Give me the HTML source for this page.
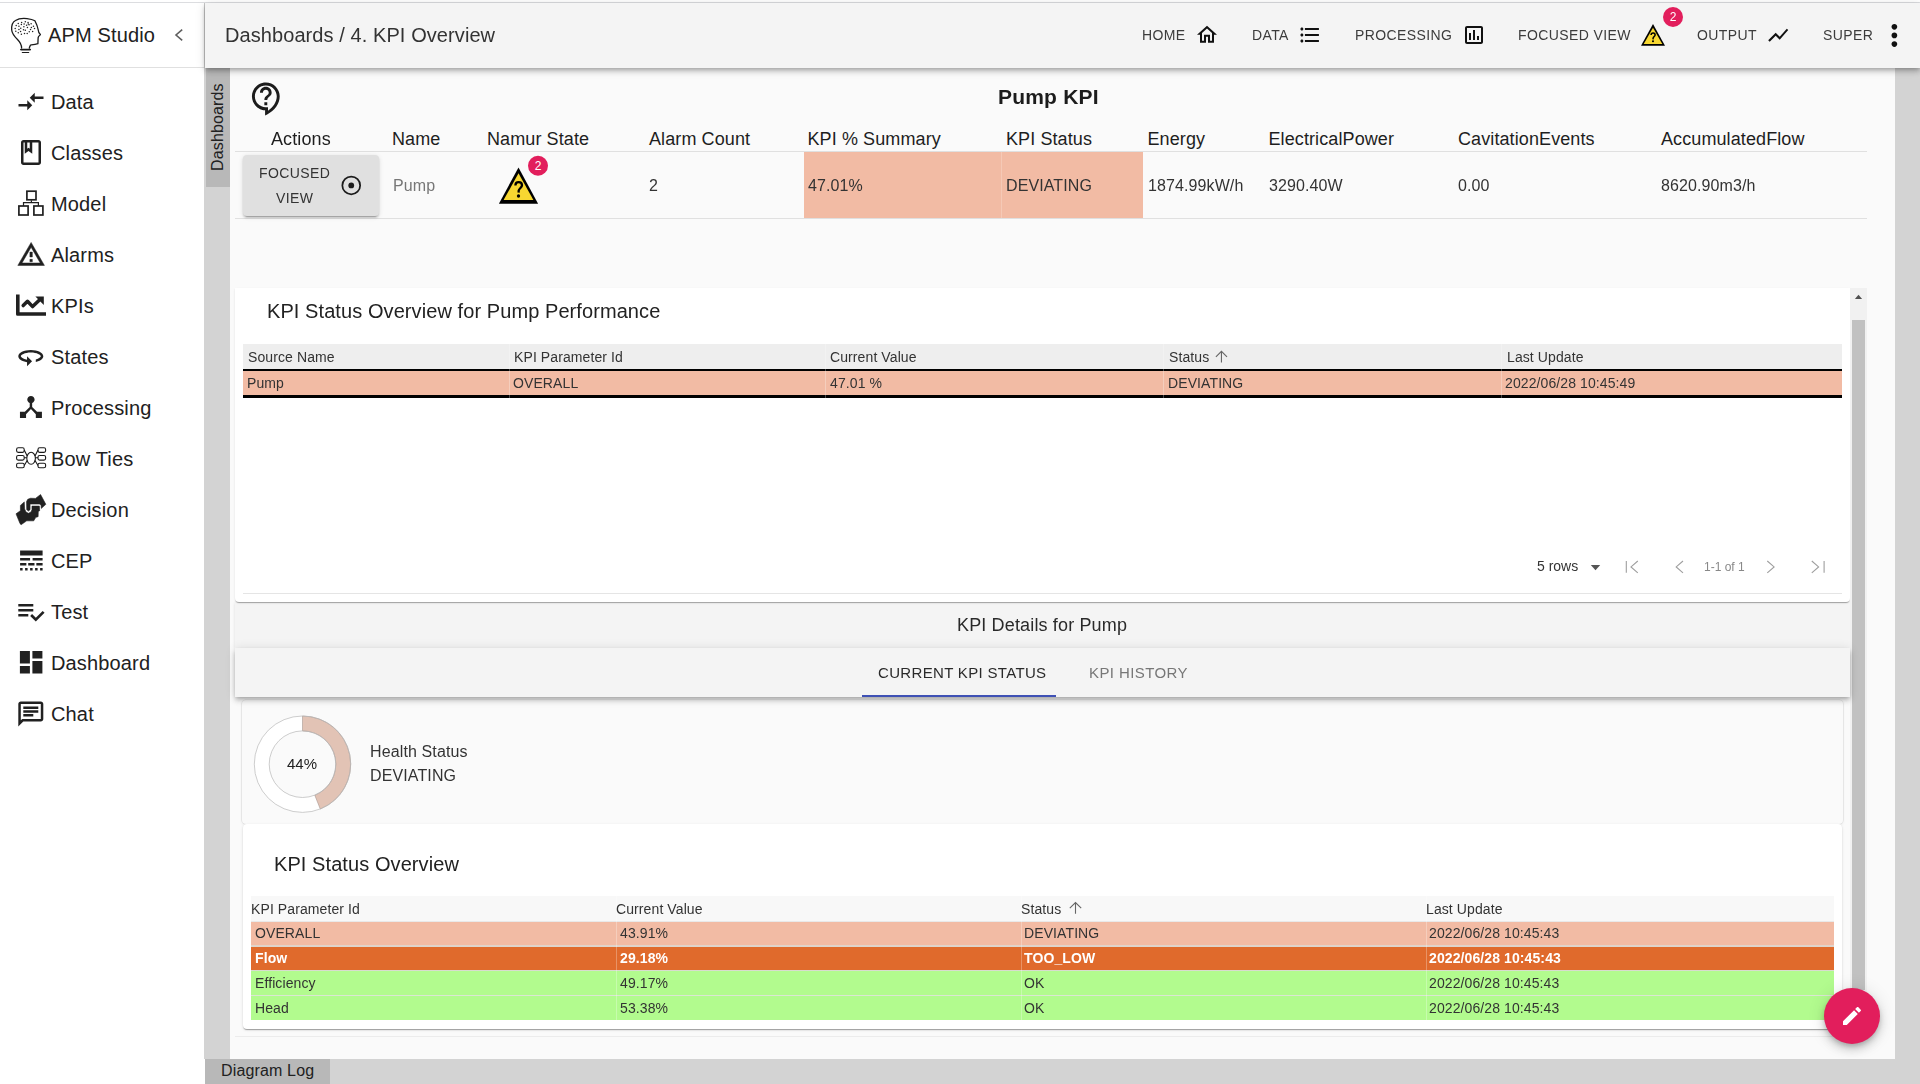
<!DOCTYPE html>
<html><head><meta charset="utf-8">
<style>
*{box-sizing:border-box;margin:0;padding:0}
html,body{width:1920px;height:1084px;overflow:hidden;background:#fff;font-family:"Liberation Sans",sans-serif;color:#212121}
.a{position:absolute}
.t{position:absolute;white-space:nowrap;line-height:1;z-index:6}
.th1{top:129.8px;font-size:18px;letter-spacing:0.1px;color:#1e1e1e}
.td1{top:177.5px;font-size:16px;letter-spacing:0.1px;color:#333}
.th2{top:350.15px;font-size:14px;letter-spacing:0.1px;color:#333}
.td2{top:375.95px;font-size:14px;letter-spacing:0.1px;color:#333}
.th3{top:902.15px;font-size:14px;letter-spacing:0.1px;color:#333}
.td3{font-size:14px;letter-spacing:0.1px;color:#333}
.g{will-change:transform}
.hb{top:28px;font-size:14px;letter-spacing:0.4px;color:#3c3c3c}
svg{position:absolute;display:block}
</style></head><body>
<!-- top line -->
<div class="a" style="left:0;top:2px;width:1920px;height:1px;background:#dcdde0"></div>

<!-- SIDEBAR -->
<div id="sidebar" class="a" style="left:0;top:3px;width:204px;height:1081px;background:#fff">
</div>
<svg class="a" style="left:0;top:0" width="204" height="1084" viewBox="0 0 204 1084" fill="#212121">
 <!-- logo -->
 <g fill="none" stroke="#1a1a1a" stroke-width="1.3" stroke-linecap="round" stroke-linejoin="round">
  <path d="M21.6,48.1 C21.6,45 21,43 17.5,39.5 C14,36 12,33.5 11.7,30 C11.4,25.5 12.5,22 15.5,20.5 C18.5,18.5 23,18.2 27,18.6 C30,19 33.5,20 34.9,20.8 C36,23 37.5,26 38,29 C38.3,32 39,33.5 40.4,34.6 C39.5,35.8 38.5,36 38.2,37.5 C38,39 38,41.5 37.9,43.7 C35,44.5 32.5,44.8 30.5,45.1 C30,46 29.5,47 29.3,48.1"/>
 </g>
 <g stroke="#1a1a1a" stroke-linecap="round"><line x1="20.8" y1="49.6" x2="30.3" y2="49.6" stroke-width="1.6"/><line x1="22.3" y1="52.5" x2="28.7" y2="52.5" stroke-width="1.1"/></g>
 <g fill="#222"><circle cx="25.34" cy="21.76" r="0.75"/><circle cx="28.04" cy="22.59" r="0.75"/><circle cx="31.15" cy="23.83" r="0.75"/><circle cx="21.60" cy="22.38" r="0.75"/><circle cx="18.28" cy="23.62" r="0.75"/><circle cx="21.40" cy="24.45" r="0.75"/><circle cx="24.10" cy="24.04" r="0.75"/><circle cx="26.59" cy="25.28" r="0.75"/><circle cx="29.08" cy="24.66" r="0.75"/><circle cx="33.44" cy="26.32" r="0.75"/><circle cx="16.21" cy="25.49" r="0.75"/><circle cx="18.91" cy="26.32" r="0.75"/><circle cx="23.89" cy="26.74" r="0.75"/><circle cx="27.42" cy="27.57" r="0.75"/><circle cx="31.36" cy="27.57" r="0.75"/><circle cx="34.47" cy="28.40" r="0.75"/><circle cx="15.17" cy="28.60" r="0.75"/><circle cx="18.91" cy="29.43" r="0.75"/><circle cx="20.77" cy="28.19" r="0.75"/><circle cx="23.47" cy="29.85" r="0.75"/><circle cx="25.34" cy="30.26" r="0.75"/><circle cx="30.53" cy="29.43" r="0.75"/><circle cx="15.79" cy="31.30" r="0.75"/><circle cx="20.57" cy="31.51" r="0.75"/><circle cx="24.51" cy="33.38" r="0.75"/><circle cx="27.21" cy="33.59" r="0.75"/><circle cx="29.28" cy="31.72" r="0.75"/><circle cx="32.60" cy="31.51" r="0.75"/><circle cx="18.28" cy="32.76" r="0.75"/><circle cx="21.40" cy="34.21" r="0.75"/><circle cx="28.25" cy="24.04" r="0.75"/></g>
 <!-- chevron -->
 <path d="M182.2,29.6 L176,35 L182.2,40.4" fill="none" stroke="#5f5f5f" stroke-width="1.6"/>
 <!-- icons -->
 <g transform="translate(16,86.5) scale(1.25)"><path d="M9.01 14H2v2h7.01v3L13 15l-3.99-4v3zm5.98-1v-3H22V8h-7.01V5L11 9l3.99 4z"/></g>
 <g transform="translate(16,137.5) scale(1.25)"><path d="M18 2H6c-1.1 0-2 .9-2 2v16c0 1.1.9 2 2 2h12c1.1 0 2-.9 2-2V4c0-1.1-.9-2-2-2zM9 4h2v5l-1-.75L9 9V4zm9 16H6V4h1v9l3-2.25L13 13V4h5v16z"/></g>
 <g fill="none" stroke="#212121" stroke-width="1.7">
  <rect x="26.9" y="191.2" width="9.1" height="8.6"/>
  <rect x="18.9" y="206" width="9.2" height="9"/>
  <rect x="33.9" y="206" width="9" height="9"/>
  <path d="M31.4,200.2 V203 M23.5,206 V202.6 H38.4 V206" stroke-width="1.2"/>
 </g>
 <g transform="translate(16.6,240) scale(1.21)" stroke="#212121" stroke-width="0.4"><path d="M12 5.99L19.53 19H4.47L12 5.99M12 2L1 21h22L12 2zm1 14h-2v2h2v-2zm0-6h-2v4h2v-4z"/></g>
 <!-- KPIs -->
 <g>
  <path d="M16,294.4 h3.6 v17.8 h26.4 v3.6 H17.5 a1.5,1.5 0 0 1 -1.5,-1.5z"/>
  <path d="M23.2,305.6 L27.5,301.3 L32.6,306.6 L39.2,300.2" fill="none" stroke="#212121" stroke-width="3.5" stroke-linecap="round" stroke-linejoin="round"/>
  <path d="M35.4,296.6 H43.8 V305z"/>
 </g>
 <g transform="translate(15.8,341.25) scale(1.25)"><path d="M12 7C6.48 7 2 9.24 2 12c0 2.24 2.94 4.13 7 4.77V20l4-4-4-4v2.73c-3.15-.56-5-1.9-5-2.73 0-1.06 3.04-3 8-3s8 1.94 8 3c0 .73-1.46 1.89-4 2.53v2.05c3.53-.77 6-2.53 6-4.58 0-2.76-4.48-5-10-5z"/></g>
 <g transform="translate(16.3,392.3) scale(1.22)"><path d="M17 16l-4-4V8.82C14.16 8.4 15 7.3 15 6c0-1.66-1.34-3-3-3S9 4.34 9 6c0 1.3.84 2.4 2 2.82V12l-4 4H3v5h5v-3.05l4-4.2 4 4.2V21h5v-5h-4z"/></g>
 <!-- bow ties -->
 <g fill="none" stroke="#1a1a1a" stroke-width="1.1">
  <rect x="16.6" y="447.8" width="7.6" height="4.6" rx="1.6"/>
  <rect x="16.6" y="455.5" width="7.6" height="4.6" rx="1.6"/>
  <rect x="16.6" y="463.2" width="7.6" height="4.6" rx="1.6"/>
  <rect x="38" y="447.8" width="7.6" height="4.6" rx="1.6"/>
  <rect x="38" y="455.5" width="7.6" height="4.6" rx="1.6"/>
  <rect x="38" y="463.2" width="7.6" height="4.6" rx="1.6"/>
  <ellipse cx="31.1" cy="458.3" rx="4.3" ry="6"/>
  <path d="M24.2,450 L27.2,456 M24.2,457.8 H26.8 M24.2,465.5 L27.2,460.5 M38,450 L35,456 M38,457.8 H35.4 M38,465.5 L35,460.5"/>
 </g>
 <!-- decision -->
 <polygon points="26.55,501.57 27.77,499.29 30.58,498.24 35.48,498.41 40.57,494.56 45.82,504.37 41.27,508.40 41.09,505.42 39.69,504.02 30.05,504.02 30.05,509.63 28.47,511.03 26.72,509.63" stroke="#212121" stroke-width="0.6" stroke-linejoin="round"/>
 <polygon points="16.03,513.83 20.41,510.68 20.41,505.42 24.27,501.92 24.62,508.93 26.02,512.08 28.47,513.31 30.93,512.08 31.98,509.63 31.98,506.12 39.34,506.12 39.69,510.68 38.29,511.38 38.11,516.64 35.83,517.34 33.73,520.84 26.72,520.84 21.11,524.70 20.06,523.65" stroke="#212121" stroke-width="0.6" stroke-linejoin="round"/>
 <g transform="translate(16.35,545.5) scale(1.25)"><path d="M3 16h5v-2H3v2zm6.5 0h5v-2h-5v2zm6.5 0h5v-2h-5v2zM3 20h2v-2H3v2zm4 0h2v-2H7v2zm4 0h2v-2h-2v2zm4 0h2v-2h-2v2zm4 0h2v-2h-2v2zM3 12h8v-2H3v2zm10 0h8v-2h-8v2zM3 4v4h18V4H3z"/></g>
 <g transform="translate(15.8,596.5) scale(1.25)"><path d="M14 10H2v2h12v-2zm0-4H2v2h12V6zM2 16h8v-2H2v2zm19.5-4.5L23 13l-6.99 7-4.51-4.5L13 14l3.01 3 5.49-5.5z"/></g>
 <g transform="translate(16.15,647.25) scale(1.25)"><path d="M3 13h8V3H3v10zm0 8h8v-6H3v6zm10 0h8V11h-8v10zm0-18v6h8V3h-8z"/></g>
 <g transform="translate(15.8,698.9) scale(1.25)"><path d="M4 4h16v12H5.17L4 17.17V4m0-2c-1.1 0-1.99.9-1.99 2L2 22l4-4h14c1.1 0 2-.9 2-2V4c0-1.1-.9-2-2-2H4zm2 10h8v2H6v-2zm0-3h12v2H6V9zm0-3h12v2H6V6z"/></g>
</svg>
<div class="t" style="left:48px;top:25px;font-size:20px;letter-spacing:0.15px;color:#212121">APM Studio</div>
<div class="t" style="left:51px;top:92px;font-size:20px;letter-spacing:0.15px;color:#212121">Data</div>
<div class="t" style="left:51px;top:143px;font-size:20px;letter-spacing:0.15px;color:#212121">Classes</div>
<div class="t" style="left:51px;top:194px;font-size:20px;letter-spacing:0.15px;color:#212121">Model</div>
<div class="t" style="left:51px;top:245px;font-size:20px;letter-spacing:0.15px;color:#212121">Alarms</div>
<div class="t" style="left:51px;top:296px;font-size:20px;letter-spacing:0.15px;color:#212121">KPIs</div>
<div class="t" style="left:51px;top:347px;font-size:20px;letter-spacing:0.15px;color:#212121">States</div>
<div class="t" style="left:51px;top:398px;font-size:20px;letter-spacing:0.15px;color:#212121">Processing</div>
<div class="t" style="left:51px;top:449px;font-size:20px;letter-spacing:0.15px;color:#212121">Bow Ties</div>
<div class="t" style="left:51px;top:500px;font-size:20px;letter-spacing:0.15px;color:#212121">Decision</div>
<div class="t" style="left:51px;top:551px;font-size:20px;letter-spacing:0.15px;color:#212121">CEP</div>
<div class="t" style="left:51px;top:602px;font-size:20px;letter-spacing:0.15px;color:#212121">Test</div>
<div class="t" style="left:51px;top:653px;font-size:20px;letter-spacing:0.15px;color:#212121">Dashboard</div>
<div class="t" style="left:51px;top:704px;font-size:20px;letter-spacing:0.15px;color:#212121">Chat</div>
<div class="a" style="left:0;top:67px;width:204px;height:1px;background:#e0e0e0"></div>
<div class="a" style="left:204px;top:3px;width:1px;height:65px;background:#c8c8c8"></div>

<!-- HEADER -->
<div class="a" style="left:205px;top:3px;width:1715px;height:65px;background:#f4f4f4;box-shadow:0 2px 4px -1px rgba(0,0,0,.2),0 4px 5px 0 rgba(0,0,0,.14),0 1px 10px 0 rgba(0,0,0,.12);z-index:5"></div>

<div class="t g" style="left:224.6px;top:25px;font-size:20px;letter-spacing:0.08px;color:#333">Dashboards / 4. KPI Overview</div>
<div class="t g hb" style="left:1142px">HOME</div>
<div class="t g hb" style="left:1252px">DATA</div>
<div class="t g hb" style="left:1355px">PROCESSING</div>
<div class="t g hb" style="left:1518px">FOCUSED VIEW</div>
<div class="t g hb" style="left:1697px">OUTPUT</div>
<div class="t g hb" style="left:1823px">SUPER</div>
<svg class="a" style="left:1100px;top:0;z-index:6" width="820" height="68" viewBox="1100 0 820 68" fill="#111">
 <g transform="translate(1195,22.8)"><path d="M12 5.69l5 4.5V18h-2v-6H9v6H7v-7.81l5-4.5M12 3L2 12h3v8h6v-6h2v6h6v-8h3L12 3z"/></g>
 <g transform="translate(1297.9,23.1)"><path d="M4 10.5c-.83 0-1.5.67-1.5 1.5s.67 1.5 1.5 1.5 1.5-.67 1.5-1.5-.67-1.5-1.5-1.5zm0-6c-.83 0-1.5.67-1.5 1.5S3.170 7.5 4 7.5 5.5 6.83 5.5 6 4.83 4.5 4 4.5zm0 12c-.83 0-1.5.68-1.5 1.5s.68 1.5 1.5 1.5 1.5-.68 1.5-1.5-.67-1.5-1.5-1.5zM7 19h14v-2H7v2zm0-6h14v-2H7v2zm0-8v2h14V5H7z"/></g>
 <g transform="translate(1462,22.9)"><path d="M19 3H5c-1.1 0-2 .9-2 2v14c0 1.1.9 2 2 2h14c1.1 0 2-.9 2-2V5c0-1.1-.9-2-2-2zm0 16H5V5h14v14zM7 10h2v7H7zm4-3h2v10h-2zm4 6h2v4h-2z"/></g>
 <path d="M1653,23.9 L1665,45.7 H1641z" fill="#000"/>
 <path d="M1653,27.8 L1662.3,44 H1643.7z" fill="#f7d731"/>
 <path d="M1651.1,35.1 C1651.1,33.7 1652,33 1653.1,33 C1654.3,33 1655.1,33.8 1655.1,34.9 C1655.1,36.3 1653.4,36.7 1653.1,38.2 L1653,39.4" fill="none" stroke="#000" stroke-width="1.5"/><circle cx="1653" cy="41.3" r="1.05" fill="#000"/>
 <circle cx="1673" cy="17" r="10" fill="#e21e5c"/>
 <text x="1673" y="21.3" font-family="Liberation Sans" font-size="12" text-anchor="middle" fill="#fff">2</text>
 <g transform="translate(1766.2,23.2)"><path d="M3.5 18.49l6-6.01 4 4L22 6.92l-1.41-1.41-7.09 7.97-4-4L2 16.99z"/></g>
 <g transform="translate(1877.1,18.2) scale(1.44)"><path d="M12 8c1.1 0 2-.9 2-2s-.9-2-2-2-2 .9-2 2 .9 2 2 2zm0 2c-1.1 0-2 .9-2 2s.9 2 2 2 2-.9 2-2-.9-2-2-2zm0 6c-1.1 0-2 .9-2 2s.9 2 2 2 2-.9 2-2-.9-2-2-2z"/></g>
</svg>

<!-- left strip -->
<div class="a" style="left:204px;top:68px;width:26px;height:991px;background:#d3d3d3"></div>
<div class="a" style="left:206px;top:68px;width:24px;height:118.6px;background:#b8b8b8"></div>
<!-- right strip -->
<div class="a" style="left:1895px;top:68px;width:25px;height:1016px;background:#d3d3d3"></div>
<!-- bottom bar -->
<div class="a" style="left:205px;top:1059px;width:1715px;height:25px;background:#d3d3d3"></div>
<div class="a" style="left:205px;top:1059px;width:125px;height:25px;background:#b8b8b8"></div>

<!-- CONTENT -->
<div class="a" style="left:230px;top:68px;width:1665px;height:991px;background:#fafafa"></div>
<div class="t" style="left:209.5px;top:171.4px;font-size:16px;letter-spacing:0.15px;color:#212121;transform:rotate(-90deg);transform-origin:0 0">Dashboards</div>
<div class="t" style="left:221px;top:1062.5px;font-size:16px;letter-spacing:0.15px;color:#212121">Diagram Log</div>

<!-- MIDDLE PANEL -->
<div class="a" style="left:234.5px;top:602px;width:1615.5px;height:46px;background:#f4f4f4;box-shadow:0 1px 3px rgba(0,0,0,.12)"></div>
<div class="a" style="left:234.5px;top:288px;width:1615px;height:313.5px;background:#fff;border-radius:0 0 4px 4px;box-shadow:0 2px 1px -1px rgba(0,0,0,.2),0 1px 1px 0 rgba(0,0,0,.14),0 1px 3px 0 rgba(0,0,0,.06)"></div>
<div class="t g" style="left:267.1px;top:301px;font-size:20px;letter-spacing:0.08px;color:#222">KPI Status Overview for Pump Performance</div>
<div class="a" style="left:243px;top:344px;width:1599px;height:25px;background:#eeeeee"></div>
<div class="a" style="left:243px;top:368.8px;width:1599px;height:2.6px;background:#000"></div>
<div class="a" style="left:243px;top:371.4px;width:1599px;height:24px;background:#f2bba4"></div>
<div class="a" style="left:243px;top:395.4px;width:1599px;height:2.6px;background:#000"></div>
<div class="a" style="left:509px;top:344px;width:1px;height:54px;background:rgba(255,255,255,.28)"></div>
<div class="a" style="left:824.5px;top:344px;width:1px;height:54px;background:rgba(255,255,255,.28)"></div>
<div class="a" style="left:1163px;top:344px;width:1px;height:54px;background:rgba(255,255,255,.28)"></div>
<div class="a" style="left:1501px;top:344px;width:1px;height:54px;background:rgba(255,255,255,.28)"></div>
<div class="t g th2" style="left:247.5px">Source Name</div>
<div class="t g th2" style="left:513.5px">KPI Parameter Id</div>
<div class="t g th2" style="left:830px">Current Value</div>
<div class="t g th2" style="left:1168.5px">Status</div>
<div class="t g th2" style="left:1506.5px">Last Update</div>
<svg class="a" style="left:1214px;top:349px" width="16" height="16" viewBox="1214 349 16 16"><path d="M1221.45,351.3 V362.4 M1215.9,356.9 L1221.45,351.3 L1227,356.9" fill="none" stroke="#666" stroke-width="1.1"/></svg>
<div class="t g td2" style="left:246.5px">Pump</div>
<div class="t g td2" style="left:512.5px">OVERALL</div>
<div class="t g td2" style="left:829.5px">47.01 %</div>
<div class="t g td2" style="left:1167.5px">DEVIATING</div>
<div class="t g td2" style="left:1505px">2022/06/28 10:45:49</div>
<div class="a" style="left:243px;top:593px;width:1599px;height:1px;background:#e5e5e5"></div>
<div class="t g" style="left:1536.5px;top:559.15px;font-size:14px;color:#333">5 rows</div>
<svg class="a" style="left:1580px;top:550px" width="270" height="35" viewBox="1580 550 270 35" fill="none" stroke="#9e9e9e" stroke-width="1.1">
 <path d="M1590.8,565 H1600.2 L1595.5,570.3z" fill="#555" stroke="none"/>
 <path d="M1626.3,561 V572.8 M1637.8,561 L1631,566.9 L1637.8,572.8"/>
 <path d="M1683,561 L1676.2,566.9 L1683,572.8"/>
 <path d="M1767.3,561 L1774.1,566.9 L1767.3,572.8"/>
 <path d="M1811.8,561 L1818.6,566.9 L1811.8,572.8 M1824.1,561 V572.8"/>
</svg>
<div class="t g" style="left:1703.5px;top:561.3px;font-size:12px;color:#888">1-1 of 1</div>

<!-- KPI DETAILS -->
<div class="t g" style="left:957.2px;top:615.8px;font-size:18px;letter-spacing:0.15px;color:#2a2a2a">KPI Details for Pump</div>
<div class="a" style="left:234.5px;top:648px;width:1615.5px;height:49px;background:#f4f4f4;box-shadow:0 2px 4px -1px rgba(0,0,0,.2),0 4px 5px 0 rgba(0,0,0,.14),0 1px 10px 0 rgba(0,0,0,.12);z-index:2"></div>
<div class="t g" style="left:877.8px;top:665.3px;font-size:15px;letter-spacing:0.33px;color:#2a2a2a">CURRENT KPI STATUS</div>
<div class="t g" style="left:1089px;top:665.3px;font-size:15px;letter-spacing:0.4px;color:#777">KPI HISTORY</div>
<div class="a" style="left:862.3px;top:694.6px;width:193.3px;height:2px;background:#3f51b5;z-index:3"></div>

<!-- HEALTH -->
<div class="a" style="left:242px;top:700px;width:1600.5px;height:124px;background:#fafafa;border-radius:4px;box-shadow:0 0 0 0.6px rgba(0,0,0,.09),0 1px 3px 0 rgba(0,0,0,.08)"></div>
<svg class="a" style="left:250px;top:712px" width="105" height="105" viewBox="250 712 105 105">
 <circle cx="302.5" cy="764.2" r="40.75" fill="none" stroke="#fff" stroke-width="14.9"/>
 <path d="M302.5,716 A48.2,48.2 0 0 1 320.26,809.01 L314.77,795.16 A33.3,33.3 0 0 0 302.5,730.9 Z" fill="#e2c3b5" stroke="#9a8a84" stroke-width="0.5"/>
 <circle cx="302.5" cy="764.2" r="48.2" fill="none" stroke="#b8b8b8" stroke-width="0.7"/>
 <circle cx="302.5" cy="764.2" r="33.3" fill="none" stroke="#b8b8b8" stroke-width="0.7"/>
</svg>
<div class="t g" style="left:287px;top:755.5px;font-size:15px;color:#222">44%</div>
<div class="t g" style="left:370px;top:743.5px;font-size:16px;letter-spacing:0.12px;color:#333">Health Status</div>
<div class="t g" style="left:370px;top:767.6px;font-size:16px;letter-spacing:0.12px;color:#333">DEVIATING</div>

<!-- BOTTOM PANEL -->
<div class="a" style="left:243px;top:824px;width:1599px;height:205px;background:#fff;border-radius:4px;box-shadow:0 2px 1px -1px rgba(0,0,0,.2),0 1px 1px 0 rgba(0,0,0,.14),0 1px 3px 0 rgba(0,0,0,.12)"></div>
<div class="t g" style="left:274.2px;top:853.8px;font-size:20px;letter-spacing:0.08px;color:#222">KPI Status Overview</div>
<div class="a" style="left:251px;top:896px;width:1583px;height:25px;background:#f8f8f8"></div>
<div class="a" style="left:251px;top:921px;width:1583px;height:1px;background:#e9e9e9"></div>
<div class="a" style="left:251px;top:922px;width:1583px;height:23px;background:#f2bba4"></div>
<div class="a" style="left:251px;top:945px;width:1583px;height:2px;background:linear-gradient(#e3d2c9,#dcd6cc)"></div>
<div class="a" style="left:251px;top:947px;width:1583px;height:23px;background:#e06a2c"></div>
<div class="a" style="left:251px;top:970px;width:1583px;height:1px;background:#d8dccf"></div>
<div class="a" style="left:251px;top:971px;width:1583px;height:24px;background:#b2fb8e"></div>
<div class="a" style="left:251px;top:995px;width:1583px;height:1px;background:#dbe6d3"></div>
<div class="a" style="left:251px;top:996px;width:1583px;height:24px;background:#b2fb8e"></div>
<div class="a" style="left:616px;top:895.5px;width:1px;height:124.5px;background:rgba(255,255,255,.28)"></div>
<div class="a" style="left:1021px;top:895.5px;width:1px;height:124.5px;background:rgba(255,255,255,.28)"></div>
<div class="a" style="left:1426px;top:895.5px;width:1px;height:124.5px;background:rgba(255,255,255,.28)"></div>
<div class="t g th3" style="left:251.3px">KPI Parameter Id</div>
<div class="t g th3" style="left:616.2px">Current Value</div>
<div class="t g th3" style="left:1020.6px">Status</div>
<div class="t g th3" style="left:1425.5px">Last Update</div>
<svg class="a" style="left:1067px;top:899px" width="16" height="18" viewBox="1067 899 16 18"><path d="M1075.5,902.5 V913.8 M1069.8,908.1 L1075.5,902.5 L1081.2,908.1" fill="none" stroke="#666" stroke-width="1.1"/></svg>
<div class="t g td3" style="left:255.1px;top:926.15px;">OVERALL</div>
<div class="t g td3" style="left:620.3px;top:926.15px;">43.91%</div>
<div class="t g td3" style="left:1024.4px;top:926.15px;">DEVIATING</div>
<div class="t g td3" style="left:1428.8px;top:926.15px;">2022/06/28 10:45:43</div>
<div class="t g td3" style="left:255.1px;top:950.85px;font-weight:bold;color:#fff;">Flow</div>
<div class="t g td3" style="left:620.3px;top:950.85px;font-weight:bold;color:#fff;">29.18%</div>
<div class="t g td3" style="left:1024.4px;top:950.85px;font-weight:bold;color:#fff;">TOO_LOW</div>
<div class="t g td3" style="left:1428.8px;top:950.85px;font-weight:bold;color:#fff;">2022/06/28 10:45:43</div>
<div class="t g td3" style="left:255.1px;top:975.85px;">Efficiency</div>
<div class="t g td3" style="left:620.3px;top:975.85px;">49.17%</div>
<div class="t g td3" style="left:1024.4px;top:975.85px;">OK</div>
<div class="t g td3" style="left:1428.8px;top:975.85px;">2022/06/28 10:45:43</div>
<div class="t g td3" style="left:255.1px;top:1000.95px;">Head</div>
<div class="t g td3" style="left:620.3px;top:1000.95px;">53.38%</div>
<div class="t g td3" style="left:1024.4px;top:1000.95px;">OK</div>
<div class="t g td3" style="left:1428.8px;top:1000.95px;">2022/06/28 10:45:43</div>
<div class="a" style="left:235px;top:1036px;width:1615px;height:1px;background:#ececec"></div>

<!-- scrollbar -->
<div class="a" style="left:1850px;top:288px;width:17px;height:749px;background:#f1f1f1"></div>
<div class="a" style="left:1852px;top:320px;width:13px;height:670px;background:#c1c1c1"></div>
<svg class="a" style="left:1850px;top:288px" width="17" height="17" viewBox="1850 288 17 17"><path d="M1854.9,299.1 L1858.5,294.8 L1862.1,299.1z" fill="#505050"/></svg>

<!-- FAB -->
<div class="a" style="left:1824px;top:988px;width:56px;height:56px;border-radius:50%;background:#e21e5c;box-shadow:0 3px 5px -1px rgba(0,0,0,.2),0 6px 10px 0 rgba(0,0,0,.14),0 1px 18px 0 rgba(0,0,0,.12);z-index:8"></div>
<svg class="a" style="left:1840px;top:1004px;z-index:9" width="24" height="24" viewBox="0 0 24 24" fill="#fff"><path d="M3 17.25V21h3.75L17.81 9.94l-3.75-3.75L3 17.25zM20.71 7.04c.39-.39.39-1.020 0-1.41l-2.34-2.34c-.39-.39-1.02-.39-1.41 0l-1.83 1.83 3.75 3.75 1.83-1.83z"/></svg>

<!-- TOP SECTION -->
<svg class="a" style="left:249.2px;top:81.2px" width="35.1" height="35.1" viewBox="0 0 24 24" fill="#1c1c1c"><path d="M11 23.59v-3.6c-5.01-.26-9-4.42-9-9.49C2 5.26 6.26 1 11.5 1S21 5.26 21 10.5c0 4.95-3.44 9.93-8.57 12.4l-2.43 1.17zM11.5 3C7.36 3 4 6.36 4 10.5S7.36 18 11.5 18H13v2.3c3.64-2.3 6-6.08 6-9.8C19 6.36 15.64 3 11.5 3zm-1 11.5h2v2h-2zm2-1.5h-2c0-3.25 3-3 3-5 0-1.1-.9-2-2-2s-2 .9-2 2h-2c0-2.21 1.79-4 4-4s4 1.79 4 4c0 2.5-3 2.75-3 5z"/></svg>
<div class="t g" style="left:998px;top:86.4px;font-size:21px;font-weight:bold;letter-spacing:0.2px;color:#1c1c1c">Pump KPI</div>
<div class="a" style="left:235px;top:151px;width:1632px;height:1px;background:#e0e0e0"></div>
<div class="a" style="left:235px;top:218px;width:1632px;height:1px;background:#e0e0e0"></div>
<div class="a" style="left:804px;top:152px;width:339px;height:66px;background:#f2bba4"></div>
<div class="a" style="left:1001px;top:152px;width:1px;height:66px;background:#f5c9b6"></div>
<div class="t g th1" style="left:271px">Actions</div>
<div class="t th1" style="left:392px">Name</div>
<div class="t th1" style="left:487px">Namur State</div>
<div class="t th1" style="left:649px">Alarm Count</div>
<div class="t th1" style="left:807.5px">KPI % Summary</div>
<div class="t th1" style="left:1006px">KPI Status</div>
<div class="t th1" style="left:1147.5px">Energy</div>
<div class="t th1" style="left:1268.5px">ElectricalPower</div>
<div class="t th1" style="left:1458px">CavitationEvents</div>
<div class="t th1" style="left:1661px">AccumulatedFlow</div>
<div class="t g td1" style="left:392.5px;color:#777">Pump</div>
<div class="t g td1" style="left:648.5px">2</div>
<div class="t g td1" style="left:808px">47.01%</div>
<div class="t g td1" style="left:1006px">DEVIATING</div>
<div class="t g td1" style="left:1148px">1874.99kW/h</div>
<div class="t g td1" style="left:1268.5px">3290.40W</div>
<div class="t g td1" style="left:1458px">0.00</div>
<div class="t g td1" style="left:1661px">8620.90m3/h</div>
<div class="a" style="left:243px;top:155px;width:136px;height:61px;background:#e0e0e0;border-radius:4px;box-shadow:0 3px 1px -2px rgba(0,0,0,.2),0 2px 2px 0 rgba(0,0,0,.14),0 1px 5px 0 rgba(0,0,0,.12)"></div>
<div class="t g" style="left:258.6px;top:166.15px;font-size:14px;letter-spacing:0.4px;color:#333">FOCUSED</div>
<div class="t g" style="left:275.5px;top:191.05px;font-size:14px;letter-spacing:0.4px;color:#333">VIEW</div>
<svg class="a" style="left:336px;top:170px" width="30" height="30" viewBox="336 170 30 30"><circle cx="351.25" cy="185.4" r="8.9" fill="none" stroke="#1c1c1c" stroke-width="1.75"/><circle cx="351.25" cy="185.4" r="2.9" fill="#1c1c1c"/></svg>
<svg class="a" style="left:490px;top:150px" width="70" height="60" viewBox="490 150 70 60">
 <path d="M518.5,167.4 L538.1,203.7 H498.9z" fill="#000"/>
 <path d="M518.5,173.3 L533.4,200.1 H503.6z" fill="#f7d731"/>
 <path d="M515.4,185.4 C515.4,183.2 516.9,182.2 518.7,182.2 C520.7,182.2 522,183.5 522,185.3 C522,187.6 519.2,188.2 518.7,190.6 L518.6,192.6" fill="none" stroke="#000" stroke-width="2.3"/><circle cx="518.5" cy="196" r="1.65" fill="#000"/>
 <circle cx="538" cy="165.8" r="10" fill="#e21e5c"/>
 <text x="538" y="170.1" font-family="Liberation Sans" font-size="12" text-anchor="middle" fill="#fff">2</text>
</svg>

</body></html>
